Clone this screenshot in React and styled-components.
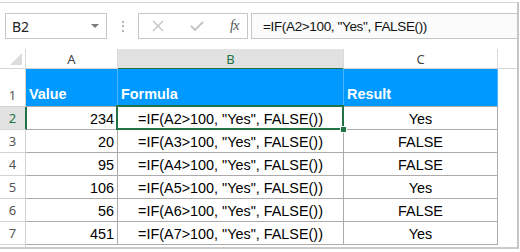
import React from 'react';
import styled, { createGlobalStyle } from 'styled-components';

const Global = createGlobalStyle`
  html, body {
    margin: 0;
    padding: 0;
    background: #fff;
    overflow: hidden;
  }
`;

const rows = [
  { n: 2, v: 234, r: 'Yes' },
  { n: 3, v: 20, r: 'FALSE' },
  { n: 4, v: 95, r: 'FALSE' },
  { n: 5, v: 106, r: 'Yes' },
  { n: 6, v: 56, r: 'FALSE' },
  { n: 7, v: 451, r: 'Yes' },
];

const Frame = styled.div`
  margin-top: 2px;
  width: 517px;
  border-top: 1px solid #d6d6d6;
  border-right: 2px solid #c6c6c6;
  border-bottom: 2px solid #cbcbcb;
  background: #fff;
`;

const Toolbar = styled.div`
  height: 46px;
  box-sizing: border-box;
  padding: 10px 0 0 5px;
  display: flex;
  align-items: flex-start;
`;

const Box = styled.div`
  height: 26px;
  box-sizing: border-box;
  border: 1px solid #c6c6c6;
  background: ${(p) => p.$bg || '#fff'};
  display: flex;
  align-items: center;
`;

const NameBox = styled(Box)`
  width: 102px;
  padding: 0 6px 0 6px;
  justify-content: space-between;
  font-family: 'Noto Sans', 'Open Sans', sans-serif;
  font-size: 14px;
  color: #222;
`;

const Caret = styled.span`
  width: 0;
  height: 0;
  border-left: 4px solid transparent;
  border-right: 4px solid transparent;
  border-top: 4px solid #7a7a7a;
  margin-right: 1px;
`;

const Dots = styled.div`
  width: 31px;
  height: 26px;
  display: flex;
  flex-direction: column;
  align-items: center;
  justify-content: center;
  gap: 2.5px;
  span {
    width: 2px;
    height: 2px;
    background: #b4b4b4;
  }
`;

const Buttons = styled(Box)`
  width: 110px;
  padding: 0 8px 0 13px;
  justify-content: space-between;
`;

const Fx = styled.span`
  font-family: 'Liberation Serif', serif;
  font-style: italic;
  font-size: 14px;
  color: #555;
  letter-spacing: -0.5px;
`;

const FormulaInput = styled(Box)`
  flex: 1;
  margin-left: 3px;
  border-right: none;
  padding-left: 11px;
  font-family: 'Liberation Sans', Arial, sans-serif;
  font-size: 13.5px;
  letter-spacing: -0.35px;
  color: #111;
`;

const Sheet = styled.div`
  display: grid;
  grid-template-columns: 26px 92px 226px 154px 1fr;
  grid-template-rows: 20px 38px repeat(6, 23px) 2px;
  overflow: hidden;
`;

const ColHead = styled.div`
  box-sizing: border-box;
  background: ${(p) => (p.$active ? '#e1e1e1' : '#fff')};
  border-right: 1px solid ${(p) => (p.$last ? '#fff' : '#dadada')};
  border-bottom: ${(p) => (p.$active ? '2px solid #217346' : '1px solid #d4d4d4')};
  color: ${(p) => (p.$active ? '#217346' : '#444')};
  font-family: 'Noto Sans', 'Open Sans', sans-serif;
  font-size: 13px;
  display: flex;
  align-items: center;
  justify-content: center;
  position: relative;
  height: ${(p) => (p.$active ? '21px' : '20px')};
`;

const Corner = styled(ColHead)`
  &::after {
    content: '';
    position: absolute;
    right: 3px;
    bottom: 3px;
    width: 0;
    height: 0;
    border-left: 12px solid transparent;
    border-bottom: 12px solid #dcdcdc;
  }
`;

const RowHead = styled.div`
  box-sizing: border-box;
  background: ${(p) => (p.$active ? '#e1e1e1' : '#fff')};
  border-right: ${(p) => (p.$active ? '2px solid #217346' : '1px solid #d4d4d4')};
  width: ${(p) => (p.$active ? '27px' : '26px')};
  position: relative;
  z-index: ${(p) => (p.$active ? 2 : 0)};
  border-bottom: 1px solid #d4d4d4;
  color: ${(p) => (p.$active ? '#217346' : '#555')};
  font-family: 'Noto Sans', 'Open Sans', sans-serif;
  font-size: 13px;
  display: flex;
  align-items: flex-end;
  justify-content: center;
  padding-bottom: 2px;
`;

const Cell = styled.div`
  box-sizing: border-box;
  position: relative;
  background: ${(p) => (p.$head ? '#0099ff' : '#fff')};
  border-right: 1px solid ${(p) => (p.$head ? '#4db6ff' : '#ababab')};
  border-bottom: 1px solid #ababab;
  font-family: 'Liberation Sans', Arial, sans-serif;
  font-size: 14.4px;
  font-weight: ${(p) => (p.$head ? 700 : 400)};
  color: ${(p) => (p.$head ? '#fff' : '#000')};
  display: flex;
  align-items: flex-end;
  justify-content: ${(p) => p.$align || 'flex-start'};
  padding: 0 3px ${(p) => (p.$head ? '4px' : '2px')} 3px;
  white-space: nowrap;
`;

const Blank = styled.div`
  background: #fff;
`;

const Selection = styled.div`
  position: absolute;
  left: -2px;
  top: -2px;
  right: -1px;
  bottom: -1px;
  border: 2px solid #217346;
  pointer-events: none;
  z-index: 3;
  &::after {
    content: '';
    position: absolute;
    right: -5px;
    bottom: -5px;
    width: 5px;
    height: 5px;
    background: #217346;
    border: 1px solid #fff;
  }
`;

const formula = (n) => `=IF(A${n}>100, "Yes", FALSE())`;

export default function App() {
  return (
    <>
      <Global />
      <Frame>
        <Toolbar>
          <NameBox>
            <span>B2</span>
            <Caret />
          </NameBox>
          <Dots>
            <span />
            <span />
            <span />
          </Dots>
          <Buttons>
            <svg width="12" height="12" viewBox="0 0 12 12">
              <path d="M1 1 L11 11 M11 1 L1 11" stroke="#c2c2c2" strokeWidth="1.3" fill="none" />
            </svg>
            <svg width="14" height="10" viewBox="0 0 14 10">
              <path d="M1 5 L5 9 L13 1" stroke="#c2c2c2" strokeWidth="1.8" fill="none" />
            </svg>
            <Fx>fx</Fx>
          </Buttons>
          <FormulaInput $bg="#fbfbfb">{formula(2)}</FormulaInput>
        </Toolbar>
        <Sheet>
          <Corner />
          <ColHead>A</ColHead>
          <ColHead $active>B</ColHead>
          <ColHead>C</ColHead>
          <ColHead $last />

          <RowHead>1</RowHead>
          <Cell $head>Value</Cell>
          <Cell $head>Formula</Cell>
          <Cell $head>Result</Cell>
          <Blank />

          {rows.map((row) => (
            <React.Fragment key={row.n}>
              <RowHead $active={row.n === 2}>{row.n}</RowHead>
              <Cell $align="flex-end">{row.v}</Cell>
              <Cell $align="center">
                {formula(row.n)}
                {row.n === 2 && <Selection />}
              </Cell>
              <Cell $align="center">{row.r}</Cell>
              <Blank />
            </React.Fragment>
          ))}

          <RowHead />
          <Blank />
          <Blank />
          <Blank />
          <Blank />
        </Sheet>
      </Frame>
    </>
  );
}
